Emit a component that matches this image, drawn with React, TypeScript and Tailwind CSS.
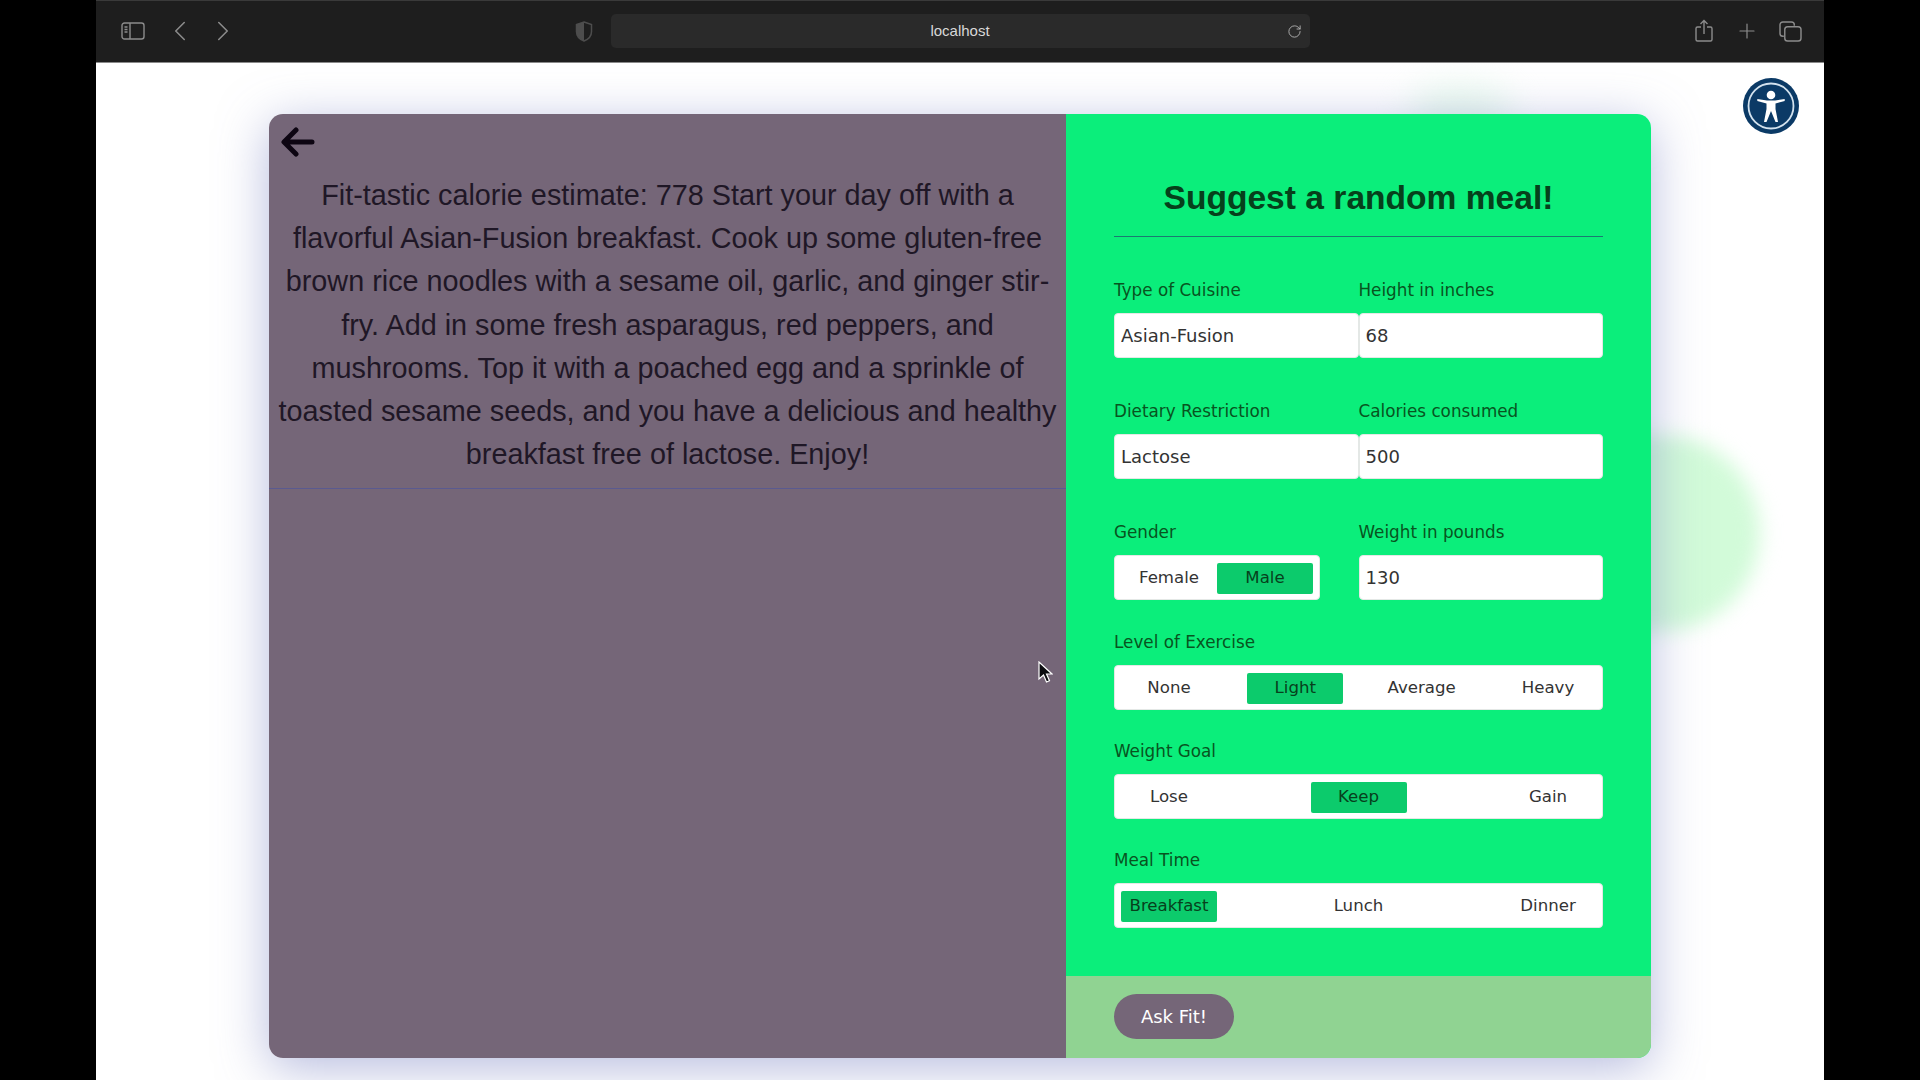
import { ChevronLeft, ChevronRight, Plus, RotateCw } from "lucide-react";

const labelCls = "block h-6 mb-[11px] text-[16.8px] leading-6 text-[#08541f] font-['DejaVu_Sans',sans-serif]";

function Field({ label, value, className = "" }: { label: string; value: string; className?: string }) {
  return (
    <div className={className}>
      <label className={labelCls}>{label}</label>
      <input
        readOnly
        value={value}
        className="h-[45px] w-full rounded-[4px] border border-[#e4e8e6] bg-white px-[6px] text-[18px] text-[#333333] outline-none font-['DejaVu_Sans',sans-serif]"
      />
    </div>
  );
}

function Segmented({ label, options, active, className = "" }: { label: string; options: string[]; active: string; className?: string }) {
  return (
    <div className={className}>
      <label className={labelCls}>{label}</label>
      <div className="flex h-[45px] items-center justify-between rounded-[4px] border border-[#e4e8e6] bg-white px-[6px] pt-[1px]">
        {options.map((o) => (
          <span
            key={o}
            className={
              o === active
                ? "flex h-[31px] w-[96px] items-center justify-center rounded-[2px] bg-[#0ccb6c] pt-[1px] text-[16.6px] text-[#07401c] font-['DejaVu_Sans',sans-serif]"
                : "flex h-[31px] w-[96px] items-center justify-center pt-[1px] text-[16.6px] text-[#333333] font-['DejaVu_Sans',sans-serif]"
            }
          >
            {o}
          </span>
        ))}
      </div>
    </div>
  );
}

function SafariBar() {
  return (
    <div className="flex h-[63px] shrink-0 items-center border-y border-t-[#3a3a3a] border-b-[#8a8a8a] bg-[#1e1e1e] pb-[1px] text-[#8c8c8c]">
      <svg width="24" height="18" viewBox="0 0 24 18" fill="none" stroke="currentColor" strokeWidth="1.4" className="ml-[25px]">
        <rect x="1" y="1" width="22" height="16" rx="2.5" />
        <path d="M9 1v16M3.5 5h3M3.5 7.5h3M3.5 10h3" />
      </svg>
      <ChevronLeft size={34} strokeWidth={1.1} className="ml-[18px]" />
      <ChevronRight size={34} strokeWidth={1.1} className="ml-[9px]" />
      <svg width="18" height="21" viewBox="0 0 18 21" className="ml-[335px] text-[#4d4d4d]">
        <path d="M9 1l7.5 2.500v7c0 5-3.500 8-7.500 9.500C5 18.500 1.500 15.500 1.500 10.500v-7z" fill="none" stroke="currentColor" strokeWidth="1.500" />
        <path d="M9 1L1.500 3.500v7c0 5 3.500 8 7.500 9.500z" fill="currentColor" />
      </svg>
      <div className="ml-[18px] flex h-[34px] w-[699px] items-center rounded-[5px] bg-[#2a2a2a] pr-[8px]">
        <span className="flex-1 pl-[22px] text-center text-[15px] text-[#d8d8d8] font-['Liberation_Sans',sans-serif]">localhost</span>
        <RotateCw size={15} strokeWidth={1.5} className="text-[#b0b0b0]" />
      </div>
      <svg width="18" height="24" viewBox="0 0 18 24" fill="none" stroke="currentColor" strokeWidth="1.4" className="ml-[385px]">
        <path d="M6 8H2.500a1.500 1.500 0 0 0-1.500 1.500v11A1.500 1.500 0 0 0 2.500 22h13a1.500 1.500 0 0 0 1.500-1.500v-11A1.500 1.500 0 0 0 15.500 8H12M9 15V1.500M5.500 5L9 1.500 12.500 5" />
      </svg>
      <Plus size={24} strokeWidth={1.2} className="ml-[22px]" />
      <svg width="23" height="21" viewBox="0 0 24 22" fill="none" stroke="currentColor" strokeWidth="1.5" className="ml-[20px]">
        <path d="M5 16H4a3 3 0 0 1-3-3V4a3 3 0 0 1 3-3h9a3 3 0 0 1 3 3v1" />
        <rect x="6" y="6" width="17" height="15" rx="3" />
      </svg>
    </div>
  );
}

function AccessibilityBadge() {
  return (
    <svg width="56" height="56" viewBox="0 0 56 56" className="absolute left-[1647px] top-[15px] z-20">
      <circle cx="28" cy="28" r="28" fill="#0b3a66" />
      <circle cx="28" cy="28" r="22.500" fill="none" stroke="#d3e2ee" strokeWidth="1.800" />
      <circle cx="28" cy="17" r="4.300" fill="#ffffff" />
      <path d="M14.300 21L24 22.500H32L41.700 21V23L32.500 25.500V31L35 44H32.500L28 33L23.500 44H21L23.500 31V25.500L14.300 23Z" fill="#ffffff" />
    </svg>
  );
}

export default function App() {
  return (
    <div className="flex h-[1080px] w-[1920px] justify-center overflow-hidden bg-black">
      <div className="flex w-[1728px] flex-col bg-white">
        <SafariBar />
        <main className="relative flex-1 overflow-hidden pl-[173px] pt-[51px]">
          {/* blurred blobs behind the card */}
          <div className="absolute left-[1315px] top-[24px] h-[60px] w-[100px] rounded-full bg-[#e8f9ee] blur-[18px]" />
          <div className="absolute left-[1454px] top-[372px] h-[196px] w-[210px] rounded-full bg-[#d2fbd9] blur-[10px]" />
          <AccessibilityBadge />

          <div className="relative z-10 flex h-[944px] w-[1382px] overflow-hidden rounded-[14px] shadow-[0_10px_50px_rgba(110,120,190,0.5)]">
            {/* Answer */}
            <section className="w-[797px] shrink-0 bg-[#756678]">
              <div className="h-[60px] pl-[12px] pt-[13px]">
                <svg width="34" height="30" viewBox="0 0 34 30" fill="none" stroke="#0d0512" strokeWidth="5" strokeLinecap="round" strokeLinejoin="round">
                  <path d="M31 15H4M15 3L3 15l12 12" />
                </svg>
              </div>
              <div className="border-b border-[#5a5a90] px-[5px] pb-[12px]">
                <p className="text-center text-[28.8px] leading-[43.2px] text-[#1f1726] font-['Liberation_Sans',sans-serif]">
                  Fit-tastic calorie estimate: 778 Start your day off with a flavorful Asian-Fusion breakfast. Cook up some gluten-free brown rice noodles with a sesame oil, garlic, and ginger stir-fry. Add in some fresh asparagus, red peppers, and mushrooms. Top it with a poached egg and a sprinkle of toasted sesame seeds, and you have a delicious and healthy breakfast free of lactose. Enjoy!
                </p>
              </div>
            </section>

            {/* Form */}
            <section className="flex w-[585px] shrink-0 flex-col bg-[#0bee7b]">
              <div className="flex-1 px-[48px] pt-[62px]">
                <h1 className="h-[44px] text-center text-[33.6px] font-bold leading-[44px] text-[#06401b] font-['Liberation_Sans',sans-serif]">
                  Suggest a random meal!
                </h1>
                <div className="mb-[41px] mt-[16px] border-b border-[#1a7a72]" />

                <div className="grid grid-cols-2">
                  <Field label="Type of Cuisine" value="Asian-Fusion" className="mb-[41px]" />
                  <Field label="Height in inches" value="68" className="mb-[41px]" />
                  <Field label="Dietary Restriction" value="Lactose" className="mb-[41px]" />
                  <Field label="Calories consumed" value="500" className="mb-[41px]" />
                  <Segmented label="Gender" options={["Female", "Male"]} active="Male" className="mb-[30px] w-[206px]" />
                  <Field label="Weight in pounds" value="130" className="mb-[30px]" />
                </div>
                <Segmented label="Level of Exercise" options={["None", "Light", "Average", "Heavy"]} active="Light" className="mb-[29px]" />
                <Segmented label="Weight Goal" options={["Lose", "Keep", "Gain"]} active="Keep" className="mb-[29px]" />
                <Segmented label="Meal Time" options={["Breakfast", "Lunch", "Dinner"]} active="Breakfast" />
              </div>

              <div className="flex h-[82px] items-center bg-[#90d392] px-[48px] pb-[2px]">
                <button className="h-[45px] w-[120px] rounded-full bg-[#756678] text-[18px] text-white font-['DejaVu_Sans',sans-serif]">
                  Ask Fit!
                </button>
              </div>
            </section>
          </div>

          {/* mouse cursor */}
          <svg width="15" height="22" viewBox="0 0 15 22" className="absolute left-[942px] top-[598px] z-30">
            <path d="M1 1v17l4.500-4 3 7 3-1.300-3-6.700H14z" fill="#0c0c10" stroke="#ffffff" strokeWidth="1.200" />
          </svg>
        </main>
      </div>
    </div>
  );
}
